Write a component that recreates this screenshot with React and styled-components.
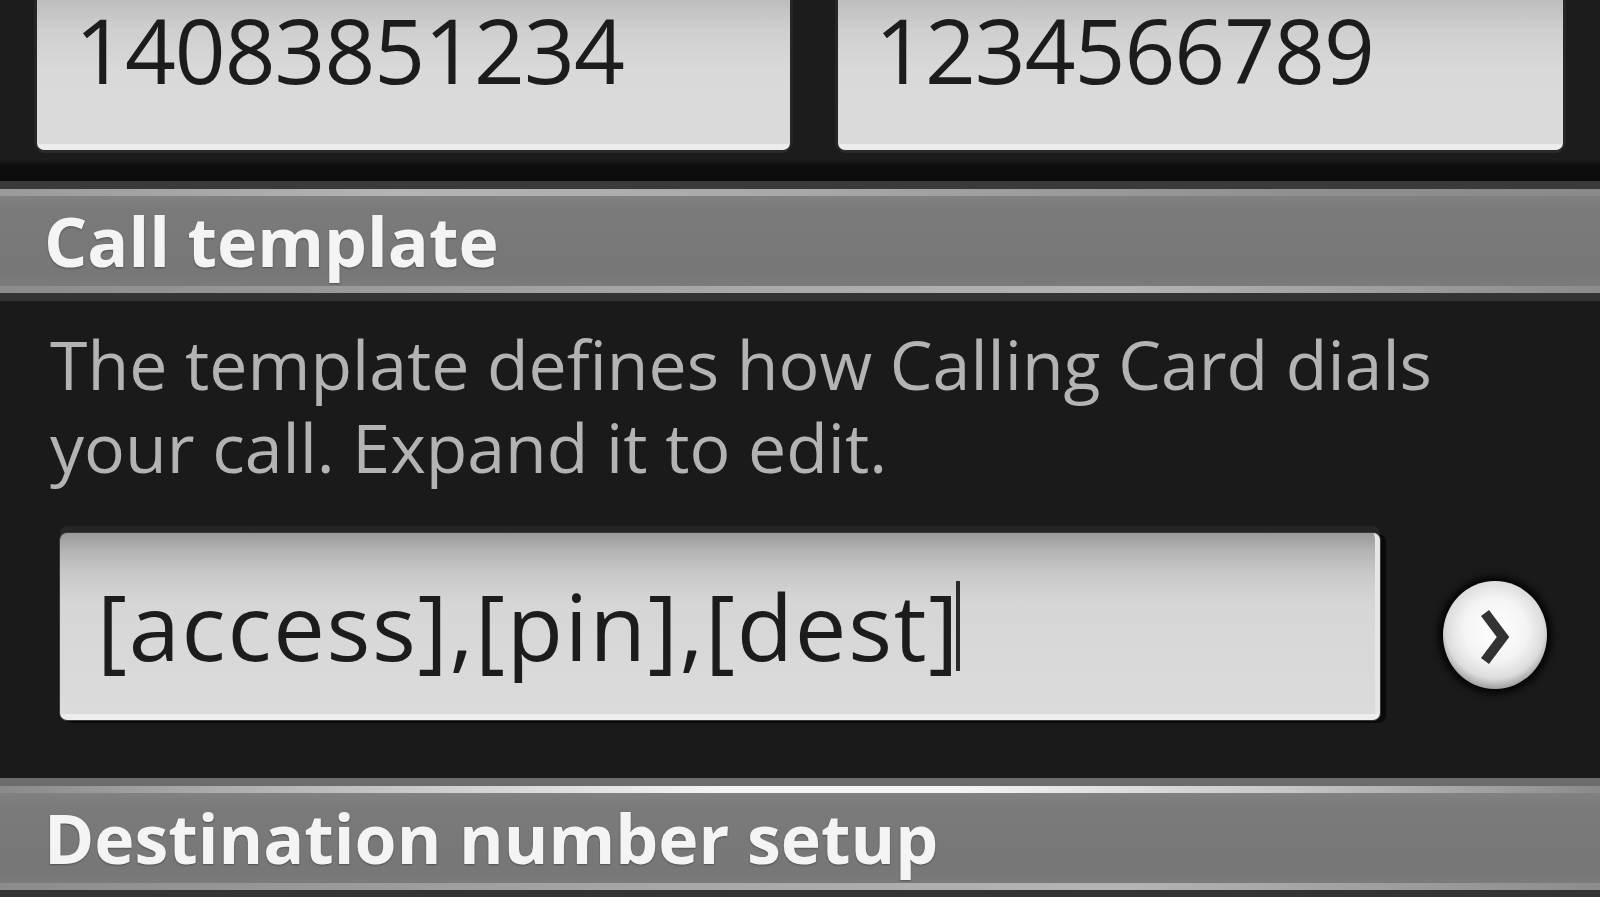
import React from "react";
import styled, { createGlobalStyle } from "styled-components";

const Global = createGlobalStyle`
  html, body { margin: 0; padding: 0; background: #1a1a1a; }
  body { width: 1600px; height: 897px; overflow: hidden; font-family: "Open Sans", "DejaVu Sans", sans-serif; }
  #root { width: 1600px; height: 897px; }
`;

const Screen = styled.div`
  width: 1600px;
  height: 897px;
  display: flex;
  flex-direction: column;
  background: #1a1a1a;
  overflow: hidden;
`;

const FieldRow = styled.div`
  display: grid;
  grid-template-columns: 753px 725px;
  column-gap: 48px;
  padding: 0 37px 31px 37px;
  background: linear-gradient(to bottom, #1c1c1c 0, #1c1c1c 160px, #0d0d0d 165px, #0d0d0d 100%);
`;

const NumberField = styled.div`
  height: 150px;
  box-sizing: border-box;
  padding: 5px 0 0 ${(p) => p.$indent}px;
  border-radius: 0 0 7px 7px;
  background: linear-gradient(to bottom, #bdbdbd 0, #cfcfcf 30px, #d9d9d9 70px, #dadada 100%);
  border-bottom: 6px solid #ececec;
  box-shadow: 0 3px 0 #2a2a2a, -3px 0 0 #262626, 3px 0 0 #262626;
  font-size: 89px;
  line-height: 90px;
  color: #1c1c1c;
  letter-spacing: -1px;
`;

const CategoryBar = styled.div`
  height: 120px;
  box-sizing: border-box;
  flex: none;
  display: flex;
  align-items: center;
  padding: 0 0 0 44px;
  border-top: 8px solid ${(p) => p.$edge};
  border-bottom: 8px solid #343434;
  background:
    ${(p) => p.$highlight} top / 100% 7px no-repeat,
    linear-gradient(to right, #8c8c8c, #a6a6a6 40%, #b4b4b4 70%, #8c8c8c) bottom / 100% 7px no-repeat,
    linear-gradient(to bottom, #858585, #7a7a7a 20%, #777 80%, #7d7d7d);
  color: #f4f4f4;
  font-size: 68px;
  font-weight: 700;
  line-height: 1;
  letter-spacing: 0;
  text-shadow: 0 1px 2px rgba(0, 0, 0, 0.35);
`;

const Section = styled.div`
  flex: none;
  height: 477px;
  box-sizing: border-box;
  padding: 21px 0 0 0;
  display: flex;
  flex-direction: column;
`;

const Summary = styled.p`
  margin: 0;
  padding: 0 60px 0 50px;
  font-size: 68px;
  line-height: 83px;
  color: #b3b3b3;
  letter-spacing: 0;
`;

const TemplateRow = styled.div`
  display: flex;
  align-items: center;
  padding: 45px 0 0 60px;
  gap: 63px;
`;

const TemplateField = styled.div`
  width: 1320px;
  height: 187px;
  box-sizing: border-box;
  flex: none;
  display: flex;
  align-items: center;
  padding: 4px 0 0 37px;
  border-radius: 7px;
  background: linear-gradient(to bottom, #9a9a9a 0, #b4b4b4 18px, #c8c8c8 40px, #d6d6d6 70px, #dbdbdb 100%);
  border-bottom: 6px solid #ededed;
  box-shadow: inset -14px 0 0 -9px #e6e6e6, 0 0 0 1px #3a3a3a, 5px 2px 0 1px #0a0a0a, 0 -7px 0 0 #262626;
  font-size: 92px;
  line-height: 92px;
  color: #1c1c1c;
  letter-spacing: 1.7px;
`;

const Cursor = styled.span`
  display: inline-block;
  width: 4px;
  height: 90px;
  margin-left: -4px;
  vertical-align: -16px;
  background: #2a2a2a;
`;

const RoundButton = styled.div`
  width: 104px;
  height: 108px;
  flex: none;
  margin-top: 16px;
  border-radius: 50%;
  display: flex;
  align-items: center;
  justify-content: center;
  background: radial-gradient(circle at 50% 45%, #ffffff 0, #f4f4f4 40%, #dcdcdc 62%, #9a9a9a 76%, #3a3a3a 92%);
  box-shadow: 0 0 6px 5px #060606;
`;

function Chevron() {
  return (
    <svg width="104" height="108" viewBox="0 0 104 108">
      <path d="M42 32 L60 56 L42 80" fill="none" stroke="#333" strokeWidth="10" strokeLinejoin="miter" />
    </svg>
  );
}

export default function App() {
  return (
    <Screen>
      <Global />
      <FieldRow>
        <NumberField $indent={38}>14083851234</NumberField>
        <NumberField $indent={37}>1234566789</NumberField>
      </FieldRow>
      <CategoryBar
        $edge="#3a3a3a"
        $highlight="linear-gradient(to right, #9a9a9a, #b4b4b4 25%, #a8a8a8 50%, #909090 80%, #8a8a8a)"
      >
        Call template
      </CategoryBar>
      <Section>
        <Summary>
          The template defines how Calling Card dials your call. Expand it to edit.
        </Summary>
        <TemplateRow>
          <TemplateField>
            [access],[pin],[dest]
            <Cursor />
          </TemplateField>
          <RoundButton>
            <Chevron />
          </RoundButton>
        </TemplateRow>
      </Section>
      <CategoryBar
        $edge="#6c6c6c"
        $highlight="linear-gradient(to right, #8a8a8a, #c8c8c8 25%, #f4f4f4 45%, #f4f4f4 60%, #c8c8c8 80%, #8a8a8a)"
      >
        Destination number setup
      </CategoryBar>
    </Screen>
  );
}
